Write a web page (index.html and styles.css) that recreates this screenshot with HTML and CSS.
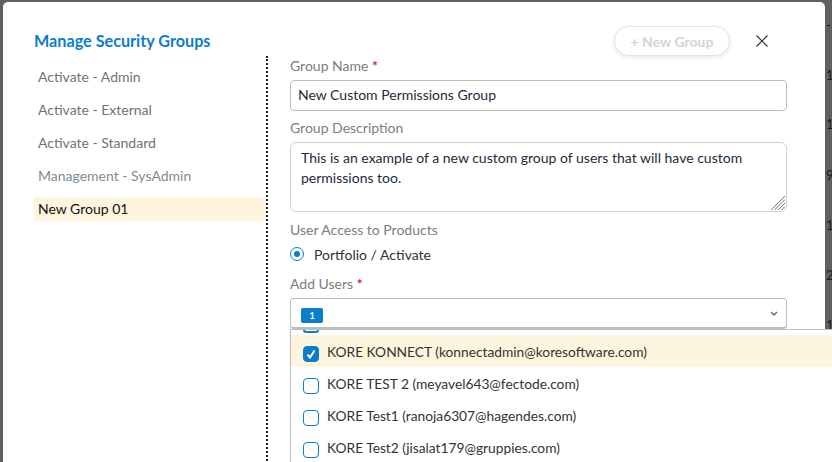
FILE: index.html
```html
<!DOCTYPE html>
<html lang="en">

<head>
    <meta charset="UTF-8">
    <title>Manage Security Groups</title>
    <link rel="stylesheet" href="styles.css">
</head>

<body>

    <div class="behind">
        <span>-</span>
        <span>1</span>
        <span>1</span>
        <span>9</span>
        <span>1</span>
        <span>2</span>
        <span>1</span>
    </div>

    <div class="modal">
        <aside class="side">
            <h1>Manage Security Groups</h1>
            <ul class="groups">
                <li>Activate - Admin</li>
                <li>Activate - External</li>
                <li>Activate - Standard</li>
                <li class="faded">Management - SysAdmin</li>
                <li class="valgt">New Group 01</li>
            </ul>
        </aside>

        <section class="form">
            <div class="top">
                <button class="new-group">+ New Group</button>
                <svg class="close" width="12" height="12" viewBox="0 0 12 12">
                    <path d="M.5.5l11 11M11.5.5l-11 11" stroke="#333" stroke-width="1.2" fill="none" />
                </svg>
            </div>

            <label class="name-label">Group Name <b>*</b></label>
            <div class="input">New Custom Permissions Group</div>

            <label class="desc-label">Group Description</label>
            <div class="textarea">
                This is an example of a new custom group of users that will have custom permissions too.
                <svg class="grip" width="14" height="14" viewBox="0 0 14 14">
                    <path d="M0 14L14 0M3.5 14L14 3.5M7 14l7-7M10.5 14l3.500-3.500" stroke="#777" stroke-width="1" fill="none" />
                </svg>
            </div>

            <label class="access-label">User Access to Products</label>
            <div class="radio-row">
                <span class="radio"></span>
                Portfolio / Activate
            </div>

            <label class="users-label">Add Users <b>*</b></label>
            <div class="select">
                <span class="count">1</span>
                <svg class="chevron" width="8" height="6" viewBox="0 0 8 6">
                    <path d="M1 1l3 3 3-3" stroke="#666" stroke-width="1.4" fill="none" />
                </svg>
            </div>

            <div class="dropdown">
                <span class="cut-box"></span>
                <div class="option valgt">
                    <span class="check on">
                        <svg width="12" height="12" viewBox="0 0 12 12">
                            <path d="M2.500 6.500l2.500 3 4.500-7" stroke="#fff" stroke-width="2" fill="none" />
                        </svg>
                    </span>
                    KORE KONNECT (konnectadmin@koresoftware.com)
                </div>
                <div class="option"><span class="check"></span>KORE TEST 2 (meyavel643@fectode.com)</div>
                <div class="option"><span class="check"></span>KORE Test1 (ranoja6307@hagendes.com)</div>
                <div class="option"><span class="check"></span>KORE Test2 (jisalat179@gruppies.com)</div>
            </div>
        </section>
    </div>

</body></html>
```

FILE: styles.css
```css
* {
    box-sizing: border-box;
}

body {
    margin: 0;
    height: 462px;
    overflow: hidden;
    background-color: #606060;
    font-family: "Lato", "Noto Sans", sans-serif;
    font-size: 14px;
    color: #222;
}

/* table digits showing behind the dialog */
.behind {
    position: absolute;
    top: 0;
    right: 0;
    width: 6px;
    height: 340px;
    overflow: hidden;
    font-size: 13px;
    line-height: 16px;
    color: #1a1a1a;
}

.behind span {
    position: absolute;
    left: 0;
}

.behind span:nth-child(1) { top: 17px; }
.behind span:nth-child(2) { top: 67px; }
.behind span:nth-child(3) { top: 116px; }
.behind span:nth-child(4) { top: 167px; }
.behind span:nth-child(5) { top: 217px; }
.behind span:nth-child(6) { top: 267px; }
.behind span:nth-child(7) { top: 317px; }

.modal {
    position: relative;
    display: flex;
    width: 822px;
    height: 470px;
    margin-left: 3px;
    margin-top: 2px;
    background-color: white;
    border-radius: 5px;
}

.side {
    width: 263px;
    flex-shrink: 0;
    padding: 30px 0 0 31px;
}

h1 {
    margin: 0 0 15px;
    font-size: 16.2px;
    line-height: 18px;
    font-weight: 700;
    color: #0a7dcc;
}

.groups {
    list-style: none;
    margin: 0;
    padding: 0;
}

.groups li {
    height: 24px;
    line-height: 24px;
    margin-bottom: 9px;
    padding-left: 4px;
    color: #6f7378;
}

.groups .faded {
    color: #7f8a96;
}

.groups .valgt {
    background-color: #fef5de;
    color: #111;
}

.form {
    position: relative;
    flex: 1;
    padding: 1px 0 0 22px;
    border-left: 2px dotted #222;
    margin-top: 54px;
}

.top {
    position: absolute;
    top: -30px;
    right: 57px;
    display: flex;
    align-items: center;
    gap: 26px;
}

.new-group {
    width: 116px;
    height: 30px;
    background-color: white;
    border: 1px solid #e2e2e2;
    border-radius: 15px;
    box-shadow: 0 2px 5px rgba(0, 0, 0, 0.08);
    font-family: inherit;
    font-size: 14px;
    font-weight: 700;
    color: #d4d4d4;
}

label {
    display: block;
    color: #7d7d7d;
    line-height: 18px;
}

label b {
    color: #e0202c;
}

.input {
    width: 497px;
    height: 31px;
    margin-top: 5px;
    padding-left: 7px;
    line-height: 27px;
    border: 1px solid #bdbdbd;
    border-radius: 4px;
    color: #1d2b3a;
}

.desc-label {
    margin-top: 8px;
}

.textarea {
    position: relative;
    width: 497px;
    height: 70px;
    margin-top: 5px;
    padding: 5px 10px;
    line-height: 20px;
    border: 1px solid #ccd2d9;
    border-radius: 6px;
    color: #1d2b3a;
}

.grip {
    position: absolute;
    right: 1px;
    bottom: 1px;
}

.access-label {
    margin-top: 9px;
}

.radio-row {
    display: flex;
    align-items: center;
    gap: 10px;
    height: 18px;
    margin-top: 6px;
    color: #333;
}

.radio {
    width: 14px;
    height: 14px;
    border: 1px solid #0a7dcc;
    border-radius: 50%;
    padding: 3px;
    background-color: #0a7dcc;
    background-clip: content-box;
}

.users-label {
    margin-top: 12px;
}

.select {
    display: flex;
    align-items: center;
    justify-content: space-between;
    width: 497px;
    height: 31px;
    margin-top: 5px;
    padding: 0 10px;
    border: 1px solid #bdbdbd;
    border-bottom-width: 2px;
    border-radius: 4px;
}

.count {
    width: 22px;
    height: 15px;
    margin-top: 4px;
    background-color: #0a7dcc;
    border-radius: 2px;
    color: white;
    font-size: 9px;
    font-weight: 700;
    line-height: 15px;
    text-align: center;
}

.chevron {
    margin-top: 2px;
    margin-right: -2px;
}

/* list hangs past the right edge of the dialog */
.dropdown {
    position: absolute;
    top: 273px;
    left: 22px;
    width: 544px;
    height: 150px;
    padding-top: 5px;
    background-color: white;
    border-left: 1px solid #bdbdbd;
    border-top: 1px solid #bdbdbd;
    overflow: hidden;
}

.cut-box {
    position: absolute;
    top: -10px;
    left: 12px;
    width: 16px;
    height: 13px;
    border: 2px solid #0a7dcc;
    border-radius: 3px;
}

.option {
    display: flex;
    align-items: center;
    gap: 8px;
    height: 32px;
    padding: 1px 0 0 12px;
    font-size: 13.75px;
    color: #333;
}

.option.valgt {
    background-color: #fef5de;
}

.check {
    display: flex;
    align-items: center;
    justify-content: center;
    width: 16px;
    height: 16px;
    margin-top: 5px;
    border: 1.500px solid #0a7dcc;
    border-radius: 4px;
}

.check.on {
    background-color: #0a7dcc;
}
```
